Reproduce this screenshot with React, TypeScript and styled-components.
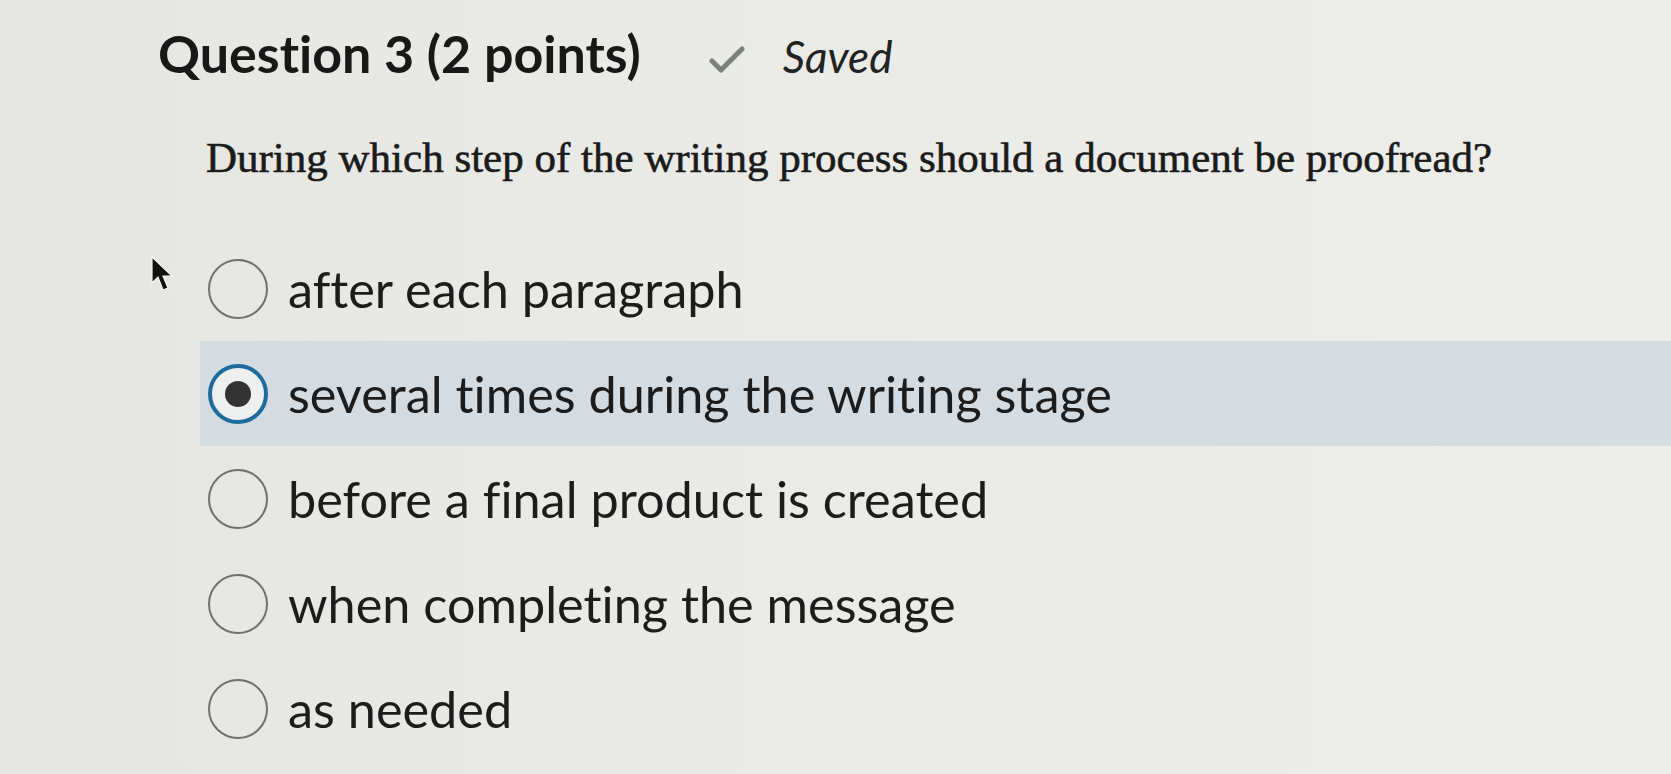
import styled, { createGlobalStyle } from "styled-components";

const GlobalStyle = createGlobalStyle`
  html, body {
    margin: 0;
    padding: 0;
    background: #e9e9e6;
  }
  body {
    font-family: Lato, "Open Sans", sans-serif;
    color: #1c1c1c;
    font-variant-ligatures: none;
  }
`;

const options = [
  "after each paragraph",
  "several times during the writing stage",
  "before a final product is created",
  "when completing the message",
  "as needed",
];

const SELECTED = 1;

const App = () => {
  return (
    <>
      <GlobalStyle />
      <Page>
        <Header>
          <Title>Question 3 (2 points)</Title>
          <SavedTag>
            <CheckIcon viewBox="0 0 36 28">
              <path d="M3 15 L12 24 L33 3" />
            </CheckIcon>
            <span>Saved</span>
          </SavedTag>
        </Header>
        <Prompt>
          During which step of the writing process should a document be
          proofread?
        </Prompt>
        <OptionList>
          <Cursor viewBox="0 0 22 36">
            <path d="M1 1 L1 27 L7 21 L12 34 L17 32 L12 20 L21 20 Z" />
          </Cursor>
          {options.map((text, i) => (
            <OptionRow key={text} $selected={i === SELECTED}>
              <Radio $selected={i === SELECTED}>
                {i === SELECTED && <Dot />}
              </Radio>
              <OptionText>{text}</OptionText>
            </OptionRow>
          ))}
        </OptionList>
      </Page>
    </>
  );
};

export default App;

const Page = styled.div`
  width: 1671px;
  height: 774px;
  overflow: hidden;
  padding-top: 24px;
  box-sizing: border-box;
  background: linear-gradient(90deg, #e5e5e2 0%, #eaeae7 45%, #ededea 100%);
`;

const Header = styled.div`
  display: flex;
  align-items: baseline;
  padding-left: 158px;
  height: 58px;
`;

const Title = styled.h1`
  margin: 0;
  font-family: Lato, sans-serif;
  font-weight: 700;
  font-size: 52px;
  line-height: 58px;
  color: #181818;
  font-variant-ligatures: none;
`;

const SavedTag = styled.div`
  display: flex;
  align-items: baseline;
  margin-left: 68px;
  gap: 38px;
  span {
    font-style: italic;
    font-size: 44px;
    color: #222;
  }
`;

const CheckIcon = styled.svg`
  width: 36px;
  height: 28px;
  fill: none;
  stroke: #7b8181;
  stroke-width: 5;
  stroke-linecap: round;
  stroke-linejoin: round;
  align-self: center;
  position: relative;
  top: 4px;
`;

const Prompt = styled.p`
  margin: 51px 0 0 206px;
  font-family: "Liberation Serif", "Times New Roman", serif;
  font-size: 43px;
  line-height: 50px;
  color: #1b1b1b;
  -webkit-text-stroke: 0.6px #1b1b1b;
`;

const OptionList = styled.div`
  position: relative;
  margin-top: 53px;
  display: flex;
  flex-direction: column;
`;

const Cursor = styled.svg`
  position: absolute;
  left: 151px;
  top: 20px;
  width: 22px;
  height: 36px;
  fill: #111;
  stroke: #f4f4f4;
  stroke-width: 1.2;
`;

const OptionRow = styled.div<{ $selected: boolean }>`
  display: flex;
  align-items: center;
  height: 105px;
  margin-left: 200px;
  padding-left: 8px;
  gap: 20px;
  background: ${(p) => (p.$selected ? "#d4dce1" : "transparent")};
`;

const Radio = styled.div<{ $selected: boolean }>`
  width: 60px;
  height: 60px;
  box-sizing: border-box;
  border-radius: 50%;
  flex-shrink: 0;
  display: flex;
  align-items: center;
  justify-content: center;
  border: ${(p) => (p.$selected ? "4px solid #1e6c9e" : "2px solid #707070")};
  background: ${(p) => (p.$selected ? "#eef0f0" : "transparent")};
`;

const Dot = styled.div`
  width: 26px;
  height: 26px;
  border-radius: 50%;
  background: #333;
`;

const OptionText = styled.span`
  font-family: Lato, sans-serif;
  font-size: 50.4px;
  line-height: 60px;
  color: #1c1c1c;
  font-variant-ligatures: none;
`;
